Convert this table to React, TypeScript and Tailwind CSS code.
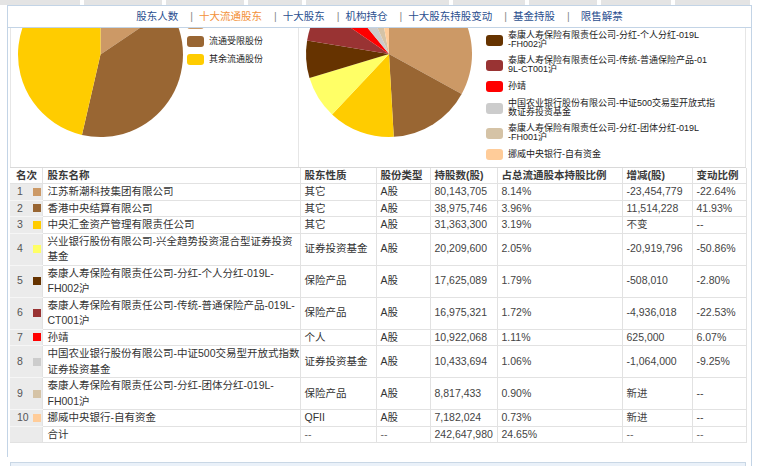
import React from 'react';

// 十大流通股东 panel: tab strip, sub-nav, two pie charts and the holder table

type Holder = {
  name: string[];
  legend: string[];
  kind: string;
  shares: string;
  pct: string;
  chg: string;
  chgPct: string;
  color: string;
  v: number;
};

const holders: Holder[] = [
  { name: ['江苏新潮科技集团有限公司'], legend: ['江苏新潮科技集团有限公司'], kind: '其它', shares: '80,143,705', pct: '8.14%', chg: '-23,454,779', chgPct: '-22.64%', color: '#cc9966', v: 8.14 },
  { name: ['香港中央结算有限公司'], legend: ['香港中央结算有限公司'], kind: '其它', shares: '38,975,746', pct: '3.96%', chg: '11,514,228', chgPct: '41.93%', color: '#996633', v: 3.96 },
  { name: ['中央汇金资产管理有限责任公司'], legend: ['中央汇金资产管理有限责任公司'], kind: '其它', shares: '31,363,300', pct: '3.19%', chg: '不变', chgPct: '--', color: '#ffcc00', v: 3.19 },
  { name: ['兴业银行股份有限公司-兴全趋势投资混合型证券投资', '基金'], legend: ['兴业银行股份有限公司-兴全趋势投资混合型证券投', '资基金'], kind: '证券投资基金', shares: '20,209,600', pct: '2.05%', chg: '-20,919,796', chgPct: '-50.86%', color: '#ffff66', v: 2.05 },
  { name: ['泰康人寿保险有限责任公司-分红-个人分红-019L-', 'FH002沪'], legend: ['泰康人寿保险有限责任公司-分红-个人分红-019L', '-FH002沪'], kind: '保险产品', shares: '17,625,089', pct: '1.79%', chg: '-508,010', chgPct: '-2.80%', color: '#663300', v: 1.79 },
  { name: ['泰康人寿保险有限责任公司-传统-普通保险产品-019L-', 'CT001沪'], legend: ['泰康人寿保险有限责任公司-传统-普通保险产品-01', '9L-CT001沪'], kind: '保险产品', shares: '16,975,321', pct: '1.72%', chg: '-4,936,018', chgPct: '-22.53%', color: '#993333', v: 1.72 },
  { name: ['孙靖'], legend: ['孙靖'], kind: '个人', shares: '10,922,068', pct: '1.11%', chg: '625,000', chgPct: '6.07%', color: '#ff0000', v: 1.11 },
  { name: ['中国农业银行股份有限公司-中证500交易型开放式指数', '证券投资基金'], legend: ['中国农业银行股份有限公司-中证500交易型开放式指', '数证券投资基金'], kind: '证券投资基金', shares: '10,433,694', pct: '1.06%', chg: '-1,064,000', chgPct: '-9.25%', color: '#cccccc', v: 1.06 },
  { name: ['泰康人寿保险有限责任公司-分红-团体分红-019L-', 'FH001沪'], legend: ['泰康人寿保险有限责任公司-分红-团体分红-019L', '-FH001沪'], kind: '保险产品', shares: '8,817,433', pct: '0.90%', chg: '新进', chgPct: '--', color: '#d5c3a6', v: 0.9 },
  { name: ['挪威中央银行-自有资金'], legend: ['挪威中央银行-自有资金'], kind: 'QFII', shares: '7,182,024', pct: '0.73%', chg: '新进', chgPct: '--', color: '#ffcc99', v: 0.73 },
];

const navItems = ['股东人数', '十大流通股东', '十大股东', '机构持仓', '十大股东持股变动', '基金持股', '限售解禁'];
const tabWidths = [80, 78, 78, 54, 143, 72, 68, 70, 75];

function slice(cx: number, cy: number, r: number, a0: number, a1: number) {
  const p = (a: number) => {
    const t = ((a - 90) * Math.PI) / 180;
    return `${cx + r * Math.cos(t)},${cy + r * Math.sin(t)}`;
  };
  const large = a1 - a0 > 180 ? 1 : 0;
  return `M${cx},${cy} L${p(a0)} A${r},${r} 0 ${large} 1 ${p(a1)} Z`;
}

function Legend({ items, className }: { items: { color: string; lines: string[] }[]; className: string }) {
  return (
    <div className={`flex flex-col gap-[7px] ${className}`}>
      {items.map((it, i) => (
        <div key={i} className="flex items-center gap-[5px]">
          <div className="w-[17px] h-[11px] rounded-[3px] shrink-0" style={{ background: it.color }} />
          {it.lines.length > 0 && (
            <div className="text-[9px] leading-[9px] text-[#222] whitespace-nowrap">
              {it.lines.map((l, j) => (
                <div key={j}>{l}</div>
              ))}
            </div>
          )}
        </div>
      ))}
    </div>
  );
}

export default function App() {
  const total = holders.reduce((s, h) => s + h.v, 0);
  let acc = 0;
  const rightSlices = holders.map((h) => {
    const a0 = (acc / total) * 360;
    acc += h.v;
    return { color: h.color, a0, a1: (acc / total) * 360 };
  });
  const leftSlices = [
    { color: '#cc9966', a0: 0, a1: 56 },
    { color: '#996633', a0: 56, a1: 193 },
    { color: '#ffcc00', a0: 193, a1: 360 },
  ];

  const cell = 'border border-[#e2e2e2] pl-[4px] align-middle';

  return (
    <div className="w-[760px] h-[466px] overflow-hidden bg-white font-['Liberation_Sans','Noto_Sans_CJK_SC',sans-serif] text-[#333]">
      {/* tab strip (mostly scrolled off) */}
      <div className="flex gap-[4px] h-[5px]">
        {tabWidths.map((w, i) => (
          <div key={i} className="h-full bg-[#e4e4e4]" style={{ width: w }} />
        ))}
      </div>

      <div className="ml-[7px] w-[745px]">
        {/* sub nav */}
        <div className="h-[23px] border border-[#c3d4e6] bg-white flex items-center justify-center text-[10.5px]">
          {navItems.map((n, i) => (
            <React.Fragment key={n}>
              <span className={i === 1 ? 'text-[#f39139]' : 'text-[#2b4f8f]'}>{n}</span>
              {i < navItems.length - 1 && (
                <span className={`text-[#888] ml-[12px] ${i === navItems.length - 2 ? 'mr-[11px]' : 'mr-[6px]'}`}>|</span>
              )}
            </React.Fragment>
          ))}
        </div>

        <div className="border-r border-[#c3d4e6]">
          <div className="border-l border-[#c3d4e6] pl-[2px] pr-[5px] pb-[14px]">
            {/* charts */}
            <div className="flex h-[140px] border-b border-[#d9d9d9] overflow-hidden">
              <div className="w-[289px] flex border-x border-[#e6e6e6] overflow-hidden">
                <svg width="176" height="139" className="shrink-0">
                  {leftSlices.map((s, i) => (
                    <path key={i} d={slice(89.5, 26.5, 82.5, s.a0, s.a1)} fill={s.color} />
                  ))}
                </svg>
                <Legend
                  className="-mt-[10px]"
                  items={[
                    { color: '#cc9966', lines: [] },
                    { color: '#996633', lines: ['流通受限股份'] },
                    { color: '#ffcc00', lines: ['其余流通股份'] },
                  ]}
                />
              </div>
              <div className="flex-1 flex border-r border-[#e6e6e6] overflow-hidden">
                <svg width="187" height="139" className="shrink-0">
                  {rightSlices.map((s, i) => (
                    <path key={i} d={slice(90, 26, 83, s.a0, s.a1)} fill={s.color} />
                  ))}
                </svg>
                <Legend className="mt-[3px]" items={holders.slice(4).map((h) => ({ color: h.color, lines: h.legend }))} />
              </div>
            </div>

            {/* holder table */}
            <table className="w-full table-fixed border-collapse text-[10.5px]">
              <colgroup>
                <col className="w-[32px]" />
                <col className="w-[258px]" />
                <col className="w-[76px]" />
                <col className="w-[54px]" />
                <col className="w-[67px]" />
                <col className="w-[125px]" />
                <col className="w-[70px]" />
                <col className="w-[54px]" />
              </colgroup>
              <thead>
                <tr className="leading-[15px] text-[#3a3a3a] text-left">
                  <th className="border-b border-r border-[#e2e2e2] pl-[6px] font-bold">名次</th>
                  <th className={`${cell} border-t-0 pl-[5px] font-bold`}>股东名称</th>
                  <th className={`${cell} border-t-0 font-bold`}>股东性质</th>
                  <th className={`${cell} border-t-0 font-bold`}>股份类型</th>
                  <th className={`${cell} border-t-0 font-bold`}>持股数(股)</th>
                  <th className={`${cell} border-t-0 font-bold`}>占总流通股本持股比例</th>
                  <th className={`${cell} border-t-0 font-bold`}>增减(股)</th>
                  <th className={`${cell} border-t-0 font-bold`}>变动比例</th>
                </tr>
              </thead>
              <tbody className="leading-[15.5px]">
                {holders.map((h, i) => (
                  <tr key={i}>
                    <td className="border-b border-[#f6f6f6] bg-[#ebebeb] pl-[7px] align-middle">
                      <div className="flex items-center">
                        <span className="w-[16px] text-[#555]">{i + 1}</span>
                        <span className="w-[8px] h-[8px]" style={{ background: h.color }} />
                      </div>
                    </td>
                    <td className={`${cell} pl-[5px] whitespace-nowrap`}>
                      {h.name.map((l, j) => (
                        <div key={j}>{l}</div>
                      ))}
                    </td>
                    <td className={cell}>{h.kind}</td>
                    <td className={cell}>A股</td>
                    <td className={`${cell} text-[#444]`}>{h.shares}</td>
                    <td className={`${cell} text-[#444]`}>{h.pct}</td>
                    <td className={`${cell} text-[#444]`}>{h.chg}</td>
                    <td className={`${cell} text-[#444]`}>{h.chgPct}</td>
                  </tr>
                ))}
                <tr>
                  <td className="border-b border-[#e2e2e2] bg-[#ebebeb]" />
                  <td className={`${cell} pl-[5px]`}>合计</td>
                  <td className={`${cell} text-[#666]`}>--</td>
                  <td className={`${cell} text-[#666]`}>--</td>
                  <td className={`${cell} text-[#444]`}>242,647,980</td>
                  <td className={`${cell} text-[#444]`}>24.65%</td>
                  <td className={`${cell} text-[#666]`}>--</td>
                  <td className={`${cell} text-[#666]`}>--</td>
                </tr>
              </tbody>
            </table>
          </div>

          {/* next section header, just peeking in */}
          <div className="ml-[3px] mr-[5px] mt-[5px] h-[20px] border border-[#c9d7e5] bg-[#eaf1f9]" />
        </div>
      </div>
    </div>
  );
}
